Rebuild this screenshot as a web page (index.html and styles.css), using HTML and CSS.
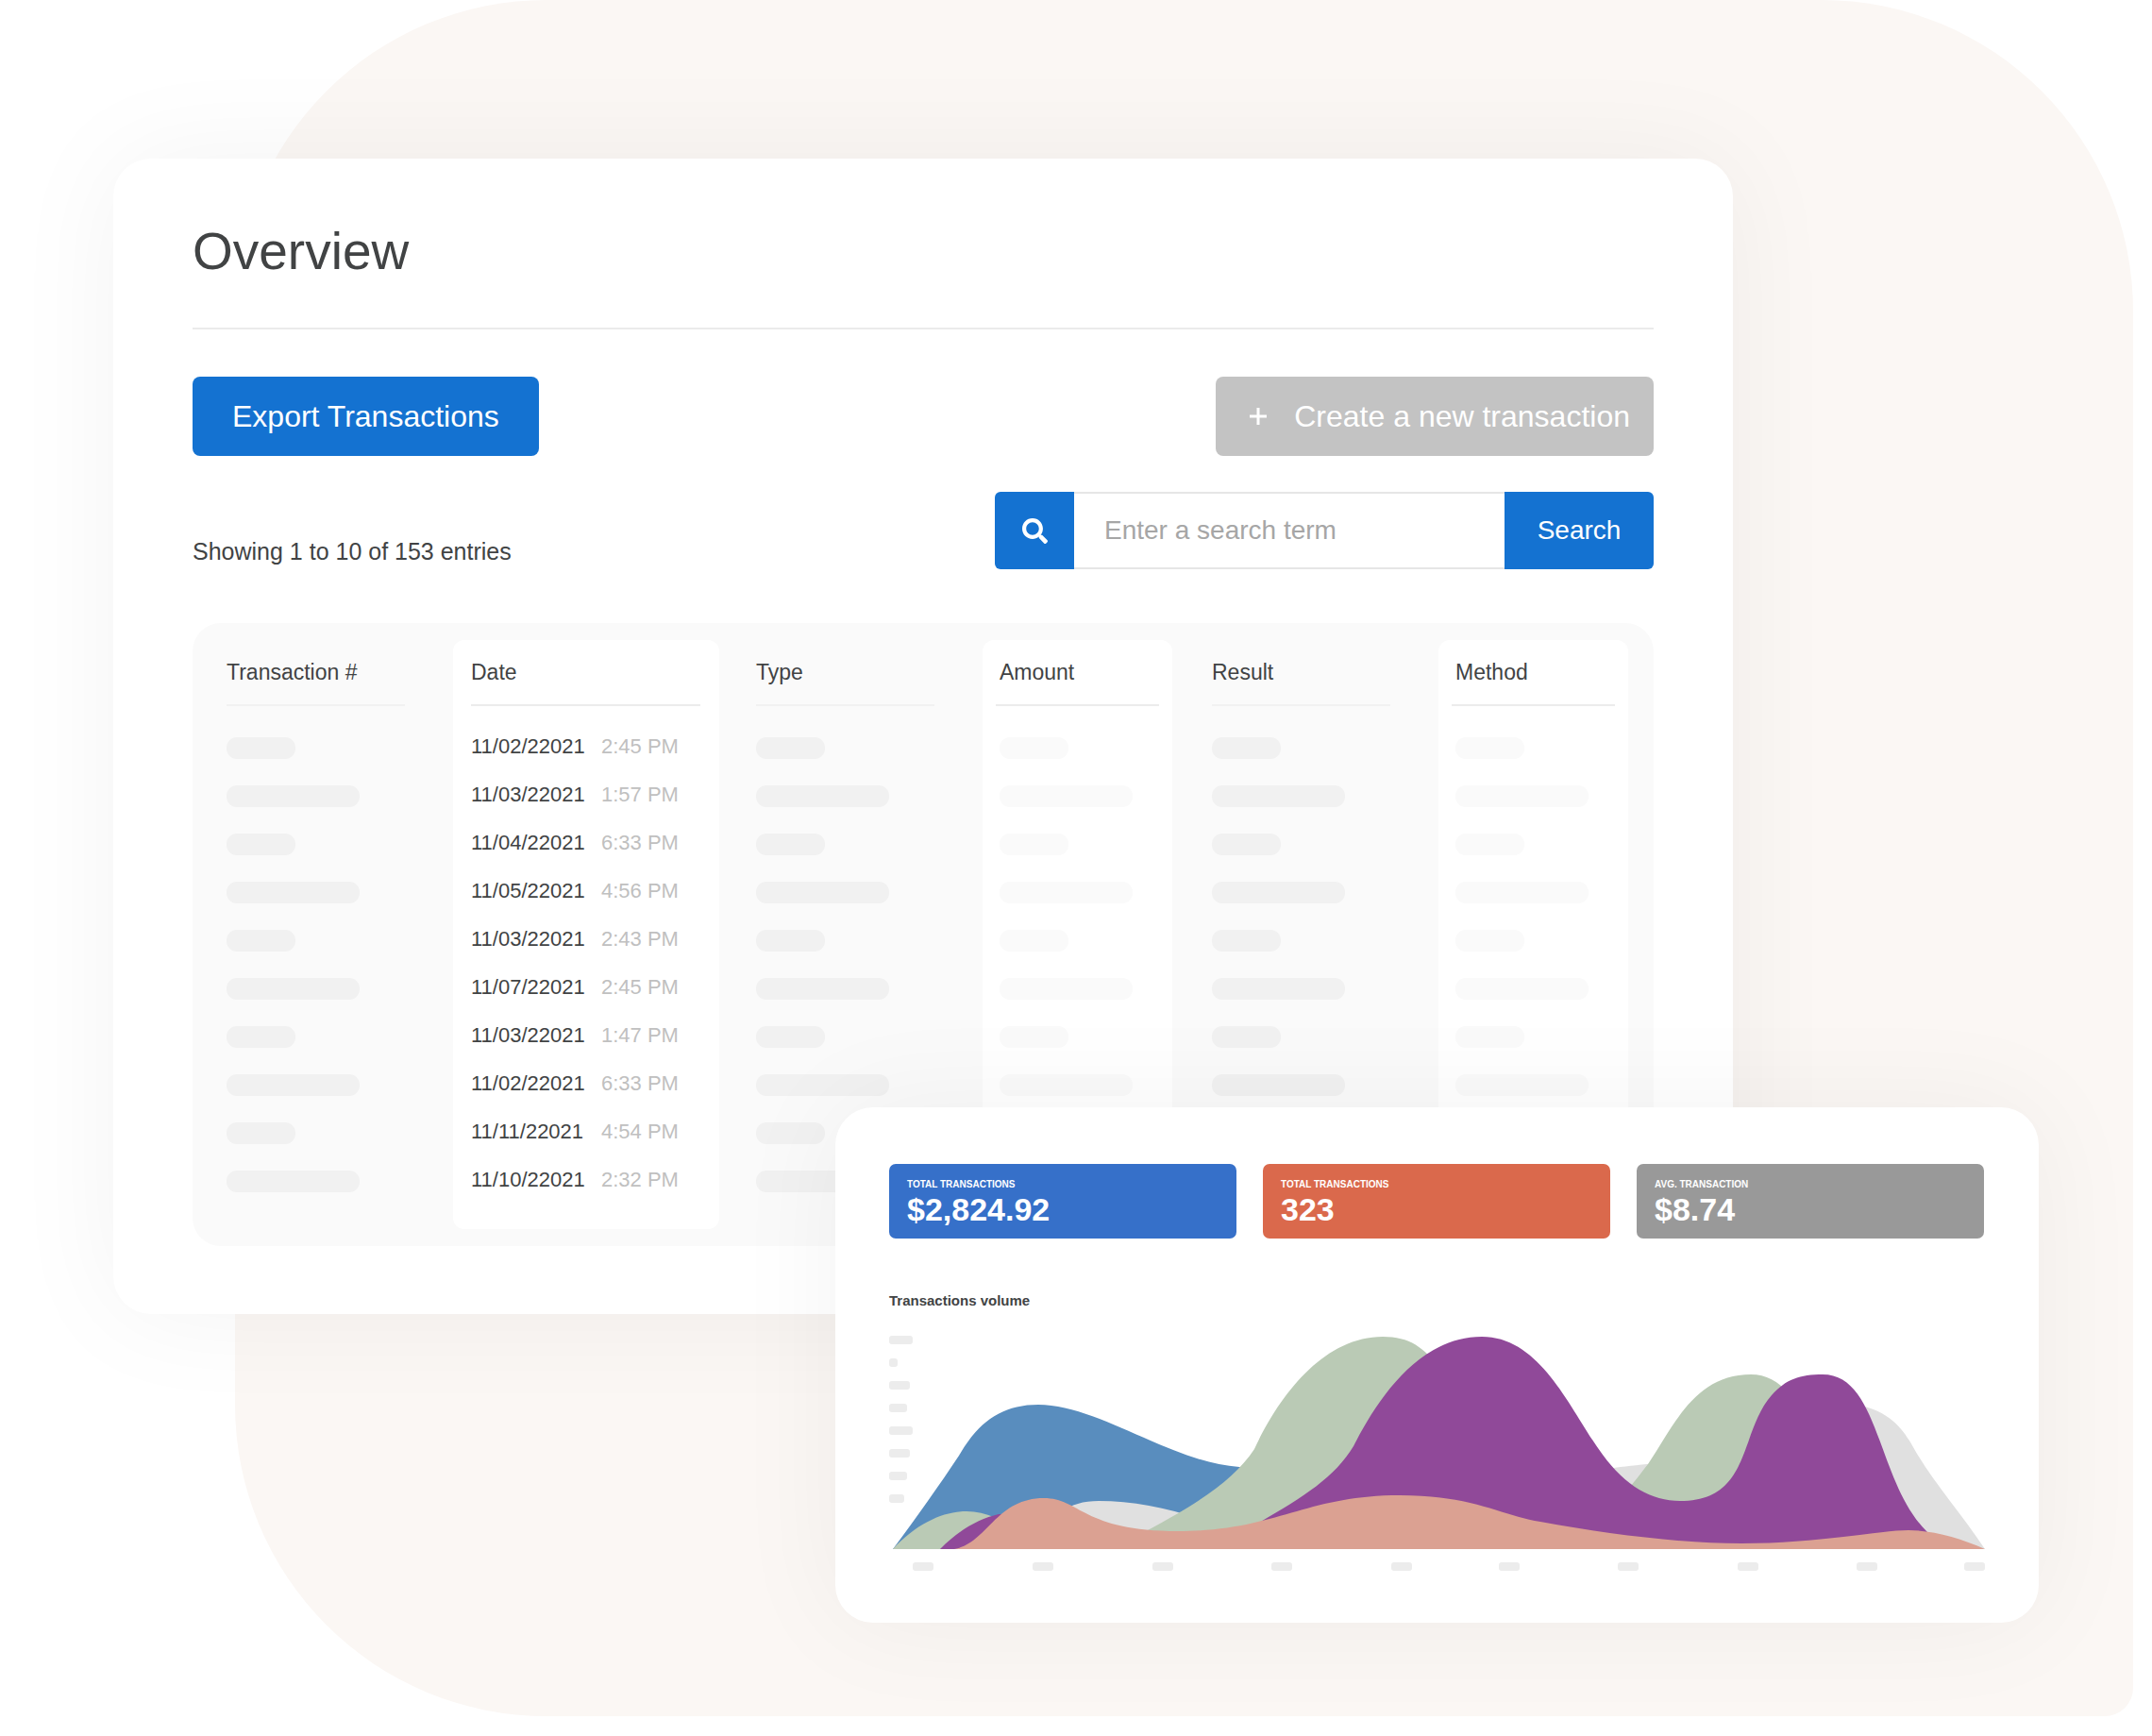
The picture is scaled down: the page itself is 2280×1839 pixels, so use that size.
FILE: index.html
```html
<!DOCTYPE html>
<html lang="en">

<head>
  <meta charset="UTF-8" />
  <meta name="viewport" content="width=device-width, initial-scale=1.0" />
  <title>Overview</title>
  <link rel="stylesheet" href="styles.css">
</head>

<body>
  <div class="stage">
    <div class="backdrop"></div>

    <!-- Transactions -->
    <main class="card overview">
      <h1>Overview</h1>

      <div class="actions">
        <button type="button" class="btn btn-primary">Export Transactions</button>
        <button type="button" class="btn btn-muted">
          <svg class="plus" viewBox="0 0 18 18" aria-hidden="true"><path d="M9 0v18M0 9h18" /></svg>
          Create a new transaction
        </button>
      </div>

      <div class="toolbar">
        <p class="showing">Showing 1 to 10 of 153 entries</p>
        <form class="search">
          <label for="searchTerm" class="search-icon" aria-label="Search term">
            <svg viewBox="0 0 512 512" aria-hidden="true"><path d="M505 442.700 405.300 343c-4.500-4.500-10.600-7-17-7H372c27.600-35.300 44-79.700 44-128C416 93.100 322.900 0 208 0S0 93.100 0 208s93.100 208 208 208c48.300 0 92.700-16.400 128-44v16.300c0 6.400 2.500 12.500 7 17l99.700 99.700c9.400 9.400 24.600 9.400 33.900 0l28.300-28.300c9.400-9.400 9.400-24.600.1-34zM208 336c-70.700 0-128-57.200-128-128 0-70.700 57.200-128 128-128 70.700 0 128 57.200 128 128 0 70.700-57.200 128-128 128z" /></svg>
          </label>
          <input type="text" id="searchTerm" placeholder="Enter a search term" />
          <button type="submit">Search</button>
        </form>
      </div>

      <div class="panel">
        <table class="transactions">
          <colgroup>
            <col class="col-id" />
            <col class="col-date" />
            <col class="col-type" />
            <col class="col-amount" />
            <col class="col-result" />
            <col class="col-method" />
          </colgroup>
          <thead>
            <tr>
              <th class="id"><span>Transaction #</span></th>
              <th class="date light"><span>Date</span></th>
              <th class="type"><span>Type</span></th>
              <th class="amount light"><span>Amount</span></th>
              <th class="result"><span>Result</span></th>
              <th class="method light"><span>Method</span></th>
            </tr>
          </thead>
          <tbody>
            <tr>
              <td class="id"><div class="bar"></div></td>
              <td class="date light"><span class="day">11/02/22021</span><span class="time">2:45 PM</span></td>
              <td class="type"><div class="bar"></div></td>
              <td class="amount light"><div class="bar"></div></td>
              <td class="result"><div class="bar"></div></td>
              <td class="method light"><div class="bar"></div></td>
            </tr>
            <tr>
              <td class="id"><div class="bar"></div></td>
              <td class="date light"><span class="day">11/03/22021</span><span class="time">1:57 PM</span></td>
              <td class="type"><div class="bar"></div></td>
              <td class="amount light"><div class="bar"></div></td>
              <td class="result"><div class="bar"></div></td>
              <td class="method light"><div class="bar"></div></td>
            </tr>
            <tr>
              <td class="id"><div class="bar"></div></td>
              <td class="date light"><span class="day">11/04/22021</span><span class="time">6:33 PM</span></td>
              <td class="type"><div class="bar"></div></td>
              <td class="amount light"><div class="bar"></div></td>
              <td class="result"><div class="bar"></div></td>
              <td class="method light"><div class="bar"></div></td>
            </tr>
            <tr>
              <td class="id"><div class="bar"></div></td>
              <td class="date light"><span class="day">11/05/22021</span><span class="time">4:56 PM</span></td>
              <td class="type"><div class="bar"></div></td>
              <td class="amount light"><div class="bar"></div></td>
              <td class="result"><div class="bar"></div></td>
              <td class="method light"><div class="bar"></div></td>
            </tr>
            <tr>
              <td class="id"><div class="bar"></div></td>
              <td class="date light"><span class="day">11/03/22021</span><span class="time">2:43 PM</span></td>
              <td class="type"><div class="bar"></div></td>
              <td class="amount light"><div class="bar"></div></td>
              <td class="result"><div class="bar"></div></td>
              <td class="method light"><div class="bar"></div></td>
            </tr>
            <tr>
              <td class="id"><div class="bar"></div></td>
              <td class="date light"><span class="day">11/07/22021</span><span class="time">2:45 PM</span></td>
              <td class="type"><div class="bar"></div></td>
              <td class="amount light"><div class="bar"></div></td>
              <td class="result"><div class="bar"></div></td>
              <td class="method light"><div class="bar"></div></td>
            </tr>
            <tr>
              <td class="id"><div class="bar"></div></td>
              <td class="date light"><span class="day">11/03/22021</span><span class="time">1:47 PM</span></td>
              <td class="type"><div class="bar"></div></td>
              <td class="amount light"><div class="bar"></div></td>
              <td class="result"><div class="bar"></div></td>
              <td class="method light"><div class="bar"></div></td>
            </tr>
            <tr>
              <td class="id"><div class="bar"></div></td>
              <td class="date light"><span class="day">11/02/22021</span><span class="time">6:33 PM</span></td>
              <td class="type"><div class="bar"></div></td>
              <td class="amount light"><div class="bar"></div></td>
              <td class="result"><div class="bar"></div></td>
              <td class="method light"><div class="bar"></div></td>
            </tr>
            <tr>
              <td class="id"><div class="bar"></div></td>
              <td class="date light"><span class="day">11/11/22021</span><span class="time">4:54 PM</span></td>
              <td class="type"><div class="bar"></div></td>
              <td class="amount light"><div class="bar"></div></td>
              <td class="result"><div class="bar"></div></td>
              <td class="method light"><div class="bar"></div></td>
            </tr>
            <tr>
              <td class="id"><div class="bar"></div></td>
              <td class="date light"><span class="day">11/10/22021</span><span class="time">2:32 PM</span></td>
              <td class="type"><div class="bar"></div></td>
              <td class="amount light"><div class="bar"></div></td>
              <td class="result"><div class="bar"></div></td>
              <td class="method light"><div class="bar"></div></td>
            </tr>
          </tbody>
        </table>
      </div>
    </main>

    <!-- Volume card, floats over the table -->
    <section class="card volume">
      <div class="tiles">
        <div class="tile tile-blue">
          <div class="tile-label">TOTAL TRANSACTIONS</div>
          <div class="tile-value">$2,824.92</div>
        </div>
        <div class="tile tile-orange">
          <div class="tile-label">TOTAL TRANSACTIONS</div>
          <div class="tile-value">323</div>
        </div>
        <div class="tile tile-gray">
          <div class="tile-label">AVG. TRANSACTION</div>
          <div class="tile-value">$8.74</div>
        </div>
      </div>

      <h2>Transactions volume</h2>

      <svg class="chart" viewBox="0 0 1160 250" aria-hidden="true">
        <path class="area-blue" d="M4 226C28 194 54 157 74 127C94 92 119 73 158 73C222 73 298 134 371 139L400 140V226Z" />
        <path class="area-gray" d="M150 226C170 190 190 175 222 175C260 175 300 183 340 198L600 200C700 150 740 142 803 136C900 130 960 70 1020 72C1060 78 1075 100 1085 118C1105 154 1135 187 1161 226Z" />
        <path class="area-green" d="M4 226C30 198 58 186 82 186C125 186 150 226 190 226H240L274 206C330 176 366 152 387 120C413 64 460 1 523 1C560 1 575 20 600 60C640 120 680 190 740 190C765 190 785 160 804 136C832 94 854 41 913 41C950 41 970 80 990 130V226Z" />
        <path class="area-purple" d="M54 226C75 205 95 194 116 189H160V226ZM340 226L392 198C440 170 472 150 492 117C516 70 560 1 628 1C692 1 723 82 756 126C780 159 808 175 838 175C914 175 900 103 935 63C950 46 965 41 989 41C1050 41 1046 155 1100 208V226Z" />
        <path class="area-salmon" d="M69 226C104 220 113 172 164 172C202 172 205 207 306 207C410 207 440 169 541 169C620 169 650 191 690 197C760 210 840 220 903 220C985 220 1050 206 1080 206C1105 206 1135 214 1161 226Z" />

        <!-- y axis -->
        <g class="ticks">
          <rect x="0" y="0" width="25" height="9" rx="3" />
          <rect x="0" y="24" width="9" height="9" rx="3" />
          <rect x="0" y="48" width="22" height="9" rx="3" />
          <rect x="0" y="72" width="19" height="9" rx="3" />
          <rect x="0" y="96" width="25" height="9" rx="3" />
          <rect x="0" y="120" width="22" height="9" rx="3" />
          <rect x="0" y="144" width="19" height="9" rx="3" />
          <rect x="0" y="168" width="16" height="9" rx="3" />
        </g>

        <!-- x axis -->
        <g class="ticks">
          <rect x="25" y="240" width="22" height="9" rx="3" />
          <rect x="152" y="240" width="22" height="9" rx="3" />
          <rect x="279" y="240" width="22" height="9" rx="3" />
          <rect x="405" y="240" width="22" height="9" rx="3" />
          <rect x="532" y="240" width="22" height="9" rx="3" />
          <rect x="646" y="240" width="22" height="9" rx="3" />
          <rect x="772" y="240" width="22" height="9" rx="3" />
          <rect x="899" y="240" width="22" height="9" rx="3" />
          <rect x="1025" y="240" width="22" height="9" rx="3" />
          <rect x="1139" y="240" width="22" height="9" rx="3" />
        </g>
      </svg>
    </section>
  </div>
</body>

</html>
```
FILE: styles.css
```css
* {
  box-sizing: border-box;
}

body {
  margin: 0;
  background-color: #fff;
  color: #414344;
  font-family: "Liberation Sans", Arial, sans-serif;
}

h1,
h2,
p {
  margin: 0;
}

button,
input {
  font-family: inherit;
  border: none;
}

button {
  cursor: pointer;
}

.stage {
  position: relative;
  display: flow-root;
  min-height: 100vh;
}

.backdrop {
  position: absolute;
  top: 0;
  right: 20px;
  bottom: 21px;
  left: 249px;
  background-color: #fbf7f4;
  border-radius: 330px 330px 30px 330px;
}

.card {
  background-color: #fff;
  border-radius: 40px;
  box-shadow: 0 0 120px rgba(0, 0, 0, 0.05);
}

/* Overview */
.overview {
  position: relative;
  margin: 168px 444px 0 120px;
  padding: 66px 84px 72px;
}

h1 {
  padding-bottom: 49px;
  border-bottom: 2px solid #ebebeb;
  font-size: 55px;
  font-weight: normal;
  line-height: 64px;
}

.actions {
  display: flex;
  justify-content: space-between;
  margin-top: 50px;
}

.btn {
  display: flex;
  align-items: center;
  height: 84px;
  border-radius: 8px;
  color: #fff;
  font-size: 32px;
}

.btn-primary {
  padding: 0 42px;
  background-color: #1472d1;
}

.btn-muted {
  gap: 29px;
  padding: 0 25px 0 36px;
  background-color: #c3c3c3;
}

.plus {
  width: 18px;
  height: 18px;
  stroke: #fff;
  stroke-width: 3;
}

.toolbar {
  display: flex;
  justify-content: space-between;
  align-items: flex-end;
  margin-top: 38px;
}

.showing {
  font-size: 25px;
  line-height: 38px;
}

.search {
  display: flex;
  width: 698px;
  height: 82px;
  border-radius: 6px;
  overflow: hidden;
}

.search-icon {
  display: flex;
  align-items: center;
  justify-content: center;
  width: 84px;
  background-color: #1472d1;
}

.search-icon svg {
  width: 27px;
  height: 27px;
  fill: #fff;
}

.search input {
  flex: 1;
  min-width: 0;
  padding: 0 32px;
  border-top: 2px solid #e6e6e6;
  border-bottom: 2px solid #e6e6e6;
  color: #414344;
  font-size: 28px;
}

.search input::placeholder {
  color: #a6a6a6;
}

.search button {
  width: 158px;
  background-color: #1472d1;
  color: #fff;
  font-size: 28px;
}

/* Transactions table */
.panel {
  margin-top: 57px;
  padding: 18px 28px 18px 0;
  background-color: #fafafa;
  border-radius: 30px;
}

.transactions {
  width: 100%;
  table-layout: fixed;
  border-spacing: 0;
}

.col-id {
  width: 276px;
}

.col-date {
  width: 282px;
}

.col-type {
  width: 279px;
}

.col-amount,
.col-method {
  width: 201px;
}

.col-result {
  width: 282px;
}

th {
  padding-top: 20px;
  padding-bottom: 17px;
  font-size: 23px;
  font-weight: normal;
  line-height: 28px;
  text-align: left;
}

th span {
  display: block;
  padding-bottom: 20px;
  border-bottom: 2px solid #f1f1f1;
}

td {
  height: 51px;
  padding-top: 3px;
  padding-bottom: 0;
  font-size: 22px;
  white-space: nowrap;
}

td.date {
  padding-top: 0;
}

.id {
  padding-left: 36px;
  padding-right: 51px;
}

.date {
  padding-left: 19px;
  padding-right: 20px;
}

.type {
  padding-left: 39px;
  padding-right: 51px;
}

.amount,
.method {
  padding-left: 18px;
  padding-right: 14px;
}

.result {
  padding-left: 42px;
  padding-right: 51px;
}

th.amount,
th.method {
  padding-left: 14px;
}

th.amount span,
th.method span {
  padding-left: 4px;
}

.light {
  background-color: #fff;
}

th.light {
  border-radius: 12px 12px 0 0;
}

th.light span {
  border-color: #ececec;
}

tbody tr:last-child td {
  height: 78px;
  padding-bottom: 27px;
}

tbody tr:last-child .light {
  border-radius: 0 0 12px 12px;
}

.day {
  display: inline-block;
  width: 138px;
}

.time {
  color: #c0c0c0;
}

.bar {
  width: 73px;
  height: 23px;
  border-radius: 11px;
  background-color: #f1f1f1;
}

.light .bar {
  background-color: #fafafa;
}

tr:nth-child(even) .bar {
  width: 141px;
}

/* Volume card */
.volume {
  position: absolute;
  right: 120px;
  bottom: 120px;
  left: 885px;
  padding: 60px 58px 54px 57px;
}

.tiles {
  display: grid;
  grid-template-columns: repeat(3, 1fr);
  gap: 28px;
}

.tile {
  padding: 16px 19px 11px;
  border-radius: 7px;
  color: #fff;
  font-weight: bold;
}

.tile-blue {
  background-color: #3670c9;
}

.tile-orange {
  background-color: #da694c;
}

.tile-gray {
  background-color: #999;
}

.tile-label {
  font-size: 10px;
  line-height: 12px;
}

.tile-value {
  font-size: 34px;
  line-height: 40px;
}

h2 {
  margin-top: 56px;
  font-size: 15px;
  line-height: 20px;
}

.chart {
  display: block;
  width: 100%;
  margin-top: 27px;
  overflow: visible;
}

.area-blue {
  fill: #598dbe;
}

.area-gray {
  fill: #e0e0e0;
}

.area-green {
  fill: #bacab5;
}

.area-purple {
  fill: #904999;
}

.area-salmon {
  fill: #dba192;
}

.ticks {
  fill: #ececec;
}
```
